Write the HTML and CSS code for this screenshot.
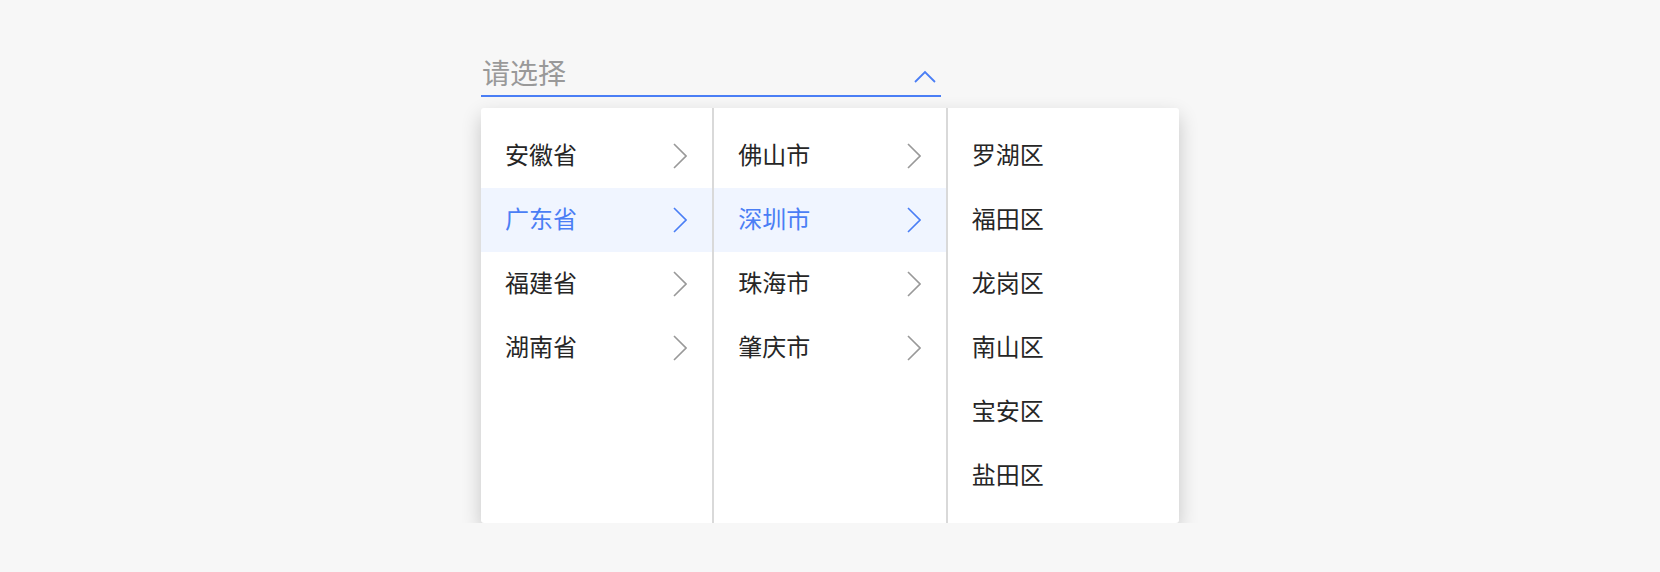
FILE: index.html
```html
<!DOCTYPE html>
<html lang="zh-CN">
<head>
<meta charset="UTF-8">
<meta name="viewport" content="width=device-width, initial-scale=1.0">
<title>级联选择</title>
<link rel="stylesheet" href="styles.css">
</head>
<body>
<div class="cascader">
    <div class="cascader-input">
        <span class="placeholder">请选择</span>
        <svg class="arrow-up" width="22" height="13" viewBox="0 0 22 13">
            <polyline points="1,12 11,2 21,12" fill="none" stroke="#4a7ef5" stroke-width="1.8"/>
        </svg>
    </div>

    <div class="cascader-menu">
        <ul class="column">
            <li class="option"><span>安徽省</span><svg class="next" viewBox="0 0 14 26"><polyline points="1,1 13,13 1,25"/></svg></li>
            <li class="option active"><span>广东省</span><svg class="next" viewBox="0 0 14 26"><polyline points="1,1 13,13 1,25"/></svg></li>
            <li class="option"><span>福建省</span><svg class="next" viewBox="0 0 14 26"><polyline points="1,1 13,13 1,25"/></svg></li>
            <li class="option"><span>湖南省</span><svg class="next" viewBox="0 0 14 26"><polyline points="1,1 13,13 1,25"/></svg></li>
        </ul>
        <ul class="column">
            <li class="option"><span>佛山市</span><svg class="next" viewBox="0 0 14 26"><polyline points="1,1 13,13 1,25"/></svg></li>
            <li class="option active"><span>深圳市</span><svg class="next" viewBox="0 0 14 26"><polyline points="1,1 13,13 1,25"/></svg></li>
            <li class="option"><span>珠海市</span><svg class="next" viewBox="0 0 14 26"><polyline points="1,1 13,13 1,25"/></svg></li>
            <li class="option"><span>肇庆市</span><svg class="next" viewBox="0 0 14 26"><polyline points="1,1 13,13 1,25"/></svg></li>
        </ul>
        <ul class="column">
            <li class="option"><span>罗湖区</span></li>
            <li class="option"><span>福田区</span></li>
            <li class="option"><span>龙岗区</span></li>
            <li class="option"><span>南山区</span></li>
            <li class="option"><span>宝安区</span></li>
            <li class="option"><span>盐田区</span></li>
        </ul>
    </div>
</div>
</body>
</html>
```

FILE: styles.css
```css
body {
    margin: 0;
    background: #f7f7f7;
    font-family: "Noto Sans CJK SC", "Noto Sans", sans-serif;
}
.cascader {
    width: 698px;
    margin: 0 auto;
    padding-top: 52px;
}
.cascader-input {
    width: 460px;
    height: 43px;
    display: flex;
    justify-content: space-between;
    align-items: center;
    border-bottom: 2px solid #4a7ef5;
}
.placeholder {
    font-size: 28px;
    line-height: 43px;
    color: #999;
    padding-left: 1px;
    margin-bottom: 2px;
}
.arrow-up {
    margin-right: 5px;
    margin-top: 6px;
}
.cascader-menu {
    margin-top: 11px;
    display: flex;
    background: #fff;
    border-radius: 3px;
    box-shadow: 0 8px 20px rgba(0, 0, 0, 0.2);
}
.column {
    flex: 1;
    list-style: none;
    margin: 0;
    padding: 16px 0 15px;
    min-height: 384px;
}
.column + .column {
    border-left: 2px solid #d9d9d9;
}
.option {
    height: 64px;
    display: flex;
    justify-content: space-between;
    align-items: center;
    padding: 0 25px 0 24px;
    font-size: 24px;
    color: #262626;
}
.option span {
    margin-bottom: 6px;
}
.option.active {
    background: #f0f5ff;
    color: #4a7ef5;
}
.next {
    width: 14px;
    height: 26px;
    fill: none;
    stroke: #999;
    stroke-width: 1.6;
}
.option.active .next {
    stroke: #4a7ef5;
}
```
